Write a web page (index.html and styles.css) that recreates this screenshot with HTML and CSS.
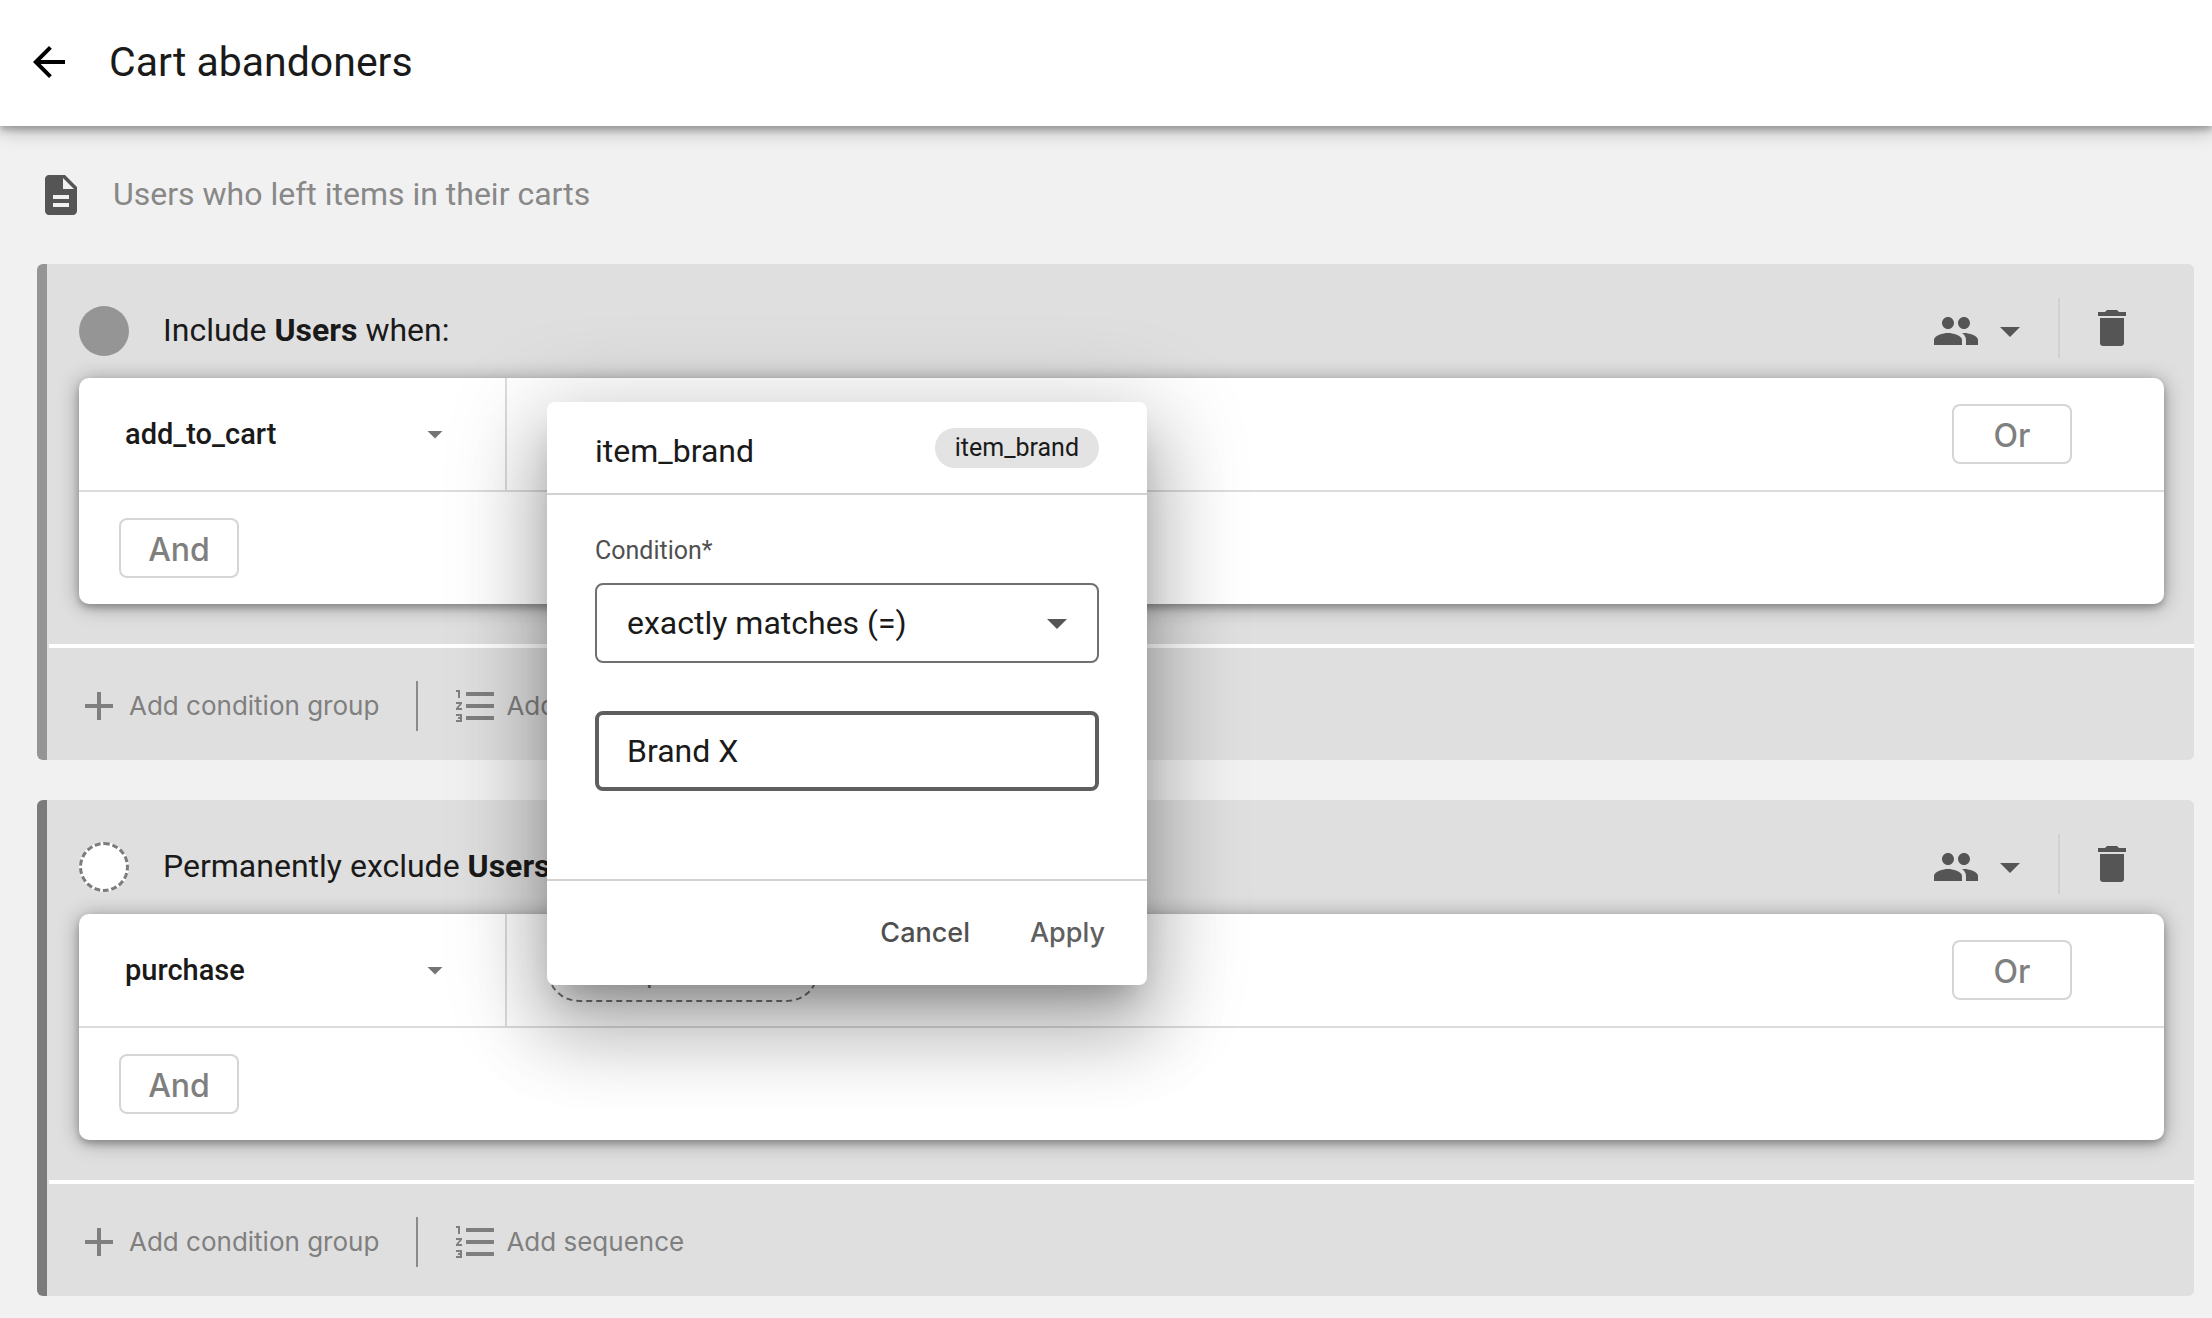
FILE: index.html
```html
<!DOCTYPE html>
<html lang="en">
<head>
<meta charset="utf-8">
<title>Cart abandoners</title>
<link rel="stylesheet" href="styles.css">
</head>
<body>
<svg class="sprite" aria-hidden="true">
  <symbol id="back" viewBox="0 0 24 24"><path d="M20 11H7.83l5.59-5.59L12 4l-8 8 8 8 1.41-1.41L7.83 13H20z"/></symbol>
  <symbol id="doc" viewBox="0 0 24 24"><path d="M14 2H6c-1.1 0-2 .9-2 2v16c0 1.100.89 2 1.990 2H18c1.100 0 2-.9 2-2V8zm2 16H8v-2h8zm0-4H8v-2h8zm-3-5V3.500L18.500 9z"/></symbol>
  <symbol id="people" viewBox="0 0 24 24"><path d="M16 11c1.660 0 2.990-1.340 2.990-3S17.660 5 16 5s-3 1.340-3 3 1.340 3 3 3zm-8 0c1.660 0 2.990-1.340 2.990-3S9.660 5 8 5 5 6.340 5 8s1.340 3 3 3zm0 2c-2.330 0-7 1.170-7 3.500V19h14v-2.500C15 14.170 10.330 13 8 13zm8 0c-.29 0-.62.02-.97.05 1.160.84 1.970 1.970 1.970 3.450V19h6v-2.500c0-2.330-4.670-3.500-7-3.500z"/></symbol>
  <symbol id="caret" viewBox="0 0 24 24"><path d="M7 10l5 5 5-5z"/></symbol>
  <symbol id="trash" viewBox="0 0 24 24"><path d="M6 19.500c0 .9.600 1.500 1.500 1.500h9c.9 0 1.500-.6 1.500-1.500V7H6zM19 4h-3.500l-1-1h-5l-1 1H5v2h14z"/></symbol>
  <symbol id="plus" viewBox="0 0 24 24"><path d="M19 13h-6v6h-2v-6H5v-2h6V5h2v6h6z"/></symbol>
  <symbol id="steps" viewBox="0 0 24 24"><path d="M2 17h2v.5H3v1h1v.5H2v1h3v-4H2zm1-9h1V4H2v1h1zm-1 3h1.800L2 13.100v.9h3v-1H3.200L5 10.900V10H2zm5-6v2h14V5zm0 14h14v-2H7zm0-6h14v-2H7z"/></symbol>
</svg>

<header class="topbar">
  <button class="icon-button back" aria-label="Back"><svg class="icon"><use href="#back"/></svg></button>
  <h1 class="topbar-title">Cart abandoners</h1>
</header>

<main class="page">
  <div class="description">
    <svg class="icon"><use href="#doc"/></svg>
    <p class="description-text">Users who left items in their carts</p>
  </div>

  <section class="group group-include">
    <div class="group-head">
      <span class="marker marker-solid"></span>
      <h2 class="group-title">Include <strong>Users</strong> when:</h2>
      <button class="icon-button scope" aria-label="Scope"><svg class="icon"><use href="#people"/></svg><svg class="icon"><use href="#caret"/></svg></button>
      <button class="icon-button remove" aria-label="Delete group"><svg class="icon"><use href="#trash"/></svg></button>
    </div>
    <div class="card">
      <div class="card-row">
        <div class="event">
          <select class="event-select" aria-label="Event"><option>add_to_cart</option></select>
          <svg class="icon icon-small"><use href="#caret"/></svg>
        </div>
        <div class="parameters"></div>
        <button class="logic or">Or</button>
      </div>
      <div class="card-row card-row-and"><button class="logic">And</button></div>
    </div>
    <div class="group-foot">
      <button class="add"><svg class="icon"><use href="#plus"/></svg>Add condition group</button>
      <button class="add add-sequence"><svg class="icon"><use href="#steps"/></svg>Add sequence</button>
    </div>
  </section>

  <section class="group group-exclude">
    <div class="group-head">
      <span class="marker marker-dashed"></span>
      <h2 class="group-title">Permanently exclude <strong>Users</strong> when:</h2>
      <button class="icon-button scope" aria-label="Scope"><svg class="icon"><use href="#people"/></svg><svg class="icon"><use href="#caret"/></svg></button>
      <button class="icon-button remove" aria-label="Delete group"><svg class="icon"><use href="#trash"/></svg></button>
    </div>
    <div class="card">
      <div class="card-row">
        <div class="event">
          <select class="event-select" aria-label="Event"><option>purchase</option></select>
          <svg class="icon icon-small"><use href="#caret"/></svg>
        </div>
        <div class="parameters"><button class="add-parameter">Add parameter</button></div>
        <button class="logic or">Or</button>
      </div>
      <div class="card-row card-row-and"><button class="logic">And</button></div>
    </div>
    <div class="group-foot">
      <button class="add"><svg class="icon"><use href="#plus"/></svg>Add condition group</button>
      <button class="add add-sequence"><svg class="icon"><use href="#steps"/></svg>Add sequence</button>
    </div>
  </section>
</main>

<form class="dialog" role="dialog" aria-labelledby="dialog-title">
  <div class="dialog-head">
    <h2 class="dialog-title" id="dialog-title">item_brand</h2>
    <span class="chip">item_brand</span>
  </div>
  <div class="dialog-body">
    <label class="field-label" for="condition">Condition*</label>
    <div class="select-wrap">
      <select class="field" id="condition"><option>exactly matches (=)</option></select>
      <svg class="icon select-caret"><use href="#caret"/></svg>
    </div>
    <input class="field field-active" type="text" value="Brand X" aria-label="Value">
  </div>
  <div class="dialog-foot">
    <button class="text-button" type="button">Cancel</button>
    <button class="text-button apply" type="button">Apply</button>
  </div>
</form>
</body>
</html>
```
FILE: styles.css
```css
* {
  box-sizing: border-box;
}

body {
  margin: 0;
  position: relative;
  background: #f1f1f1;
  color: #1a1a1a;
  font-family: Roboto, "Liberation Sans", sans-serif;
  font-size: 32px;
  line-height: 40px;
}

h1,
h2,
p {
  margin: 0;
  font-weight: 400;
  font-size: inherit;
}

button,
select,
input {
  margin: 0;
  padding: 0;
  border: 0;
  background: none;
  color: inherit;
  font: inherit;
}

select {
  appearance: none;
}

input:focus,
select:focus {
  outline: none;
}

.sprite {
  display: none;
}

.icon {
  flex: none;
  display: block;
  width: 48px;
  height: 48px;
  fill: #555;
}

.icon-small {
  width: 36px;
  height: 36px;
  fill: #757575;
}

.icon-button {
  display: flex;
  align-items: center;
}

/* Top bar */
.topbar {
  position: relative;
  display: flex;
  align-items: center;
  gap: 36px;
  height: 126px;
  padding: 0 25px 2px;
  background: #fff;
  box-shadow: 0 4px 6px rgba(0, 0, 0, .2), 0 2px 20px rgba(0, 0, 0, .36);
}

.back .icon {
  fill: #000;
}

.topbar-title {
  font-size: 41px;
  line-height: 48px;
}

.page {
  padding: 45px 18px 22px 37px;
}

.description {
  display: flex;
  align-items: center;
  gap: 28px;
  margin-bottom: 45px;
}

.description-text {
  padding-bottom: 2px;
  color: #888;
}

/* Condition groups */
.group {
  border-left: 10px solid #959595;
  border-radius: 6px;
  background: #dfdfdf;
}

.group-exclude {
  margin-top: 40px;
  border-color: #7c7c7c;
}

.group-head {
  display: flex;
  align-items: center;
  height: 114px;
  padding: 20px 58px 0 32px;
}

.marker {
  width: 50px;
  height: 50px;
  margin-right: 34px;
  border-radius: 50%;
}

.marker-solid {
  background: #959595;
}

.marker-dashed {
  border: 3px dashed #7c7c7c;
  background: #fff;
}

.group-title {
  flex: 1;
  padding-bottom: 2px;
}

.scope {
  gap: 6px;
  height: 60px;
  margin-bottom: 6px;
  padding: 6px 24px 0 0;
  border-right: 2px solid #d2d2d2;
}

.remove {
  padding: 0 0 6px 28px;
}

.card {
  margin: 0 30px 40px 32px;
  border-radius: 10px;
  background: #fff;
  box-shadow: 0 4px 6px rgba(0, 0, 0, .2), 0 2px 20px rgba(0, 0, 0, .36);
}

.card-row {
  display: flex;
  align-items: center;
  height: 112px;
}

.card-row-and {
  height: 114px;
  padding-left: 40px;
  border-top: 2px solid #dcdcdc;
}

.event {
  display: flex;
  align-items: center;
  align-self: stretch;
  width: 428px;
  padding: 0 52px 0 46px;
  border-right: 2px solid #dcdcdc;
}

.event-select {
  flex: 1;
  font-size: 29px;
  font-weight: 500;
}

.parameters {
  flex: 1;
  padding-left: 40px;
}

.add-parameter {
  width: 272px;
  height: 64px;
  padding-top: 4px;
  border: 2px dashed #777;
  border-radius: 32px;
  color: #777;
  font-size: 29px;
}

.logic {
  width: 120px;
  height: 60px;
  padding-top: 4px;
  border: 2px solid #d5d5d5;
  border-radius: 8px;
  color: #7f7f7f;
  font-family: Inter, "Liberation Sans", sans-serif;
  font-weight: 500;
}

.or {
  margin-right: 92px;
}

.group-foot {
  display: flex;
  align-items: center;
  height: 116px;
  margin-left: 2px;
  padding-top: 4px;
  border-top: 4px solid #fff;
}

.add {
  display: flex;
  align-items: center;
  gap: 6px;
  height: 50px;
  padding: 0 37px 0 26px;
  color: #7f7f7f;
  font-family: Inter, "Liberation Sans", sans-serif;
  font-size: 26px;
}

.add .icon {
  fill: #7f7f7f;
}

.add-sequence {
  border-left: 2px solid #8a8a8a;
  padding-left: 34px;
}

/* Parameter dialog */
.dialog {
  position: absolute;
  top: 402px;
  left: 547px;
  width: 600px;
  border-radius: 8px;
  background: #fff;
  box-shadow: 0 22px 30px -14px rgba(0, 0, 0, .26), 0 48px 76px 6px rgba(0, 0, 0, .19), 0 18px 92px 16px rgba(0, 0, 0, .17);
}

.dialog-head {
  display: flex;
  align-items: center;
  justify-content: space-between;
  height: 93px;
  padding: 0 48px;
  border-bottom: 2px solid #d2d2d2;
}

.dialog-title {
  padding-top: 6px;
}

.chip {
  height: 40px;
  padding: 0 20px;
  border-radius: 20px;
  background: #e3e3e3;
  font-size: 25px;
}

.dialog-body {
  padding: 36px 48px 88px;
}

.field-label {
  display: block;
  margin-bottom: 12px;
  color: #505050;
  font-size: 25px;
}

.select-wrap {
  display: grid;
  align-items: center;
  margin-bottom: 48px;
}

.select-wrap > * {
  grid-area: 1 / 1;
}

.select-caret {
  justify-self: end;
  margin-right: 18px;
  pointer-events: none;
}

.field {
  width: 100%;
  height: 80px;
  padding: 0 30px;
  border: 2px solid #707070;
  border-radius: 8px;
}

.field-active {
  display: block;
  padding: 0 28px;
  border: 4px solid #5e5e5e;
}

.dialog-foot {
  display: flex;
  align-items: center;
  justify-content: flex-end;
  gap: 60px;
  height: 106px;
  padding: 0 42px;
  border-top: 2px solid #d2d2d2;
}

.text-button {
  color: #505050;
  font-family: Inter, "Liberation Sans", sans-serif;
  font-size: 27px;
  font-weight: 500;
}

.apply {
  color: #606060;
}
```
